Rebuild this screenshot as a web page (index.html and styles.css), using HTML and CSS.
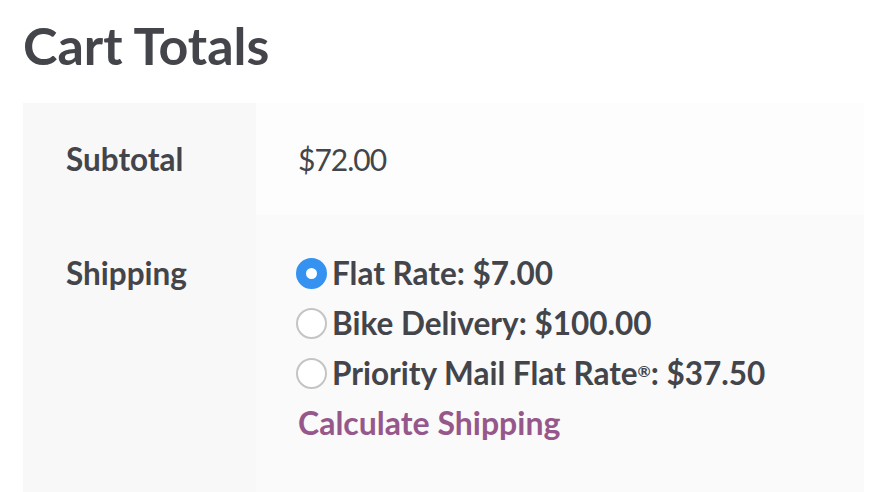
FILE: index.html
```html
<!DOCTYPE html>
<html lang="en">
<head>
  <meta charset="UTF-8">
  <title>Cart Totals</title>
  <link rel="stylesheet" href="styles.css">
</head>
<body>
  <div class="cart-totals">
    <h2>Cart Totals</h2>

    <table class="totals-table">
      <tr class="subtotal">
        <th>Subtotal</th>
        <td><span class="amount">$72.00</span></td>
      </tr>
      <tr class="shipping">
        <th>Shipping</th>
        <td>
          <ul class="shipping-methods">
            <li><span class="radio checked"></span>Flat Rate: $7.00</li>
            <li><span class="radio"></span>Bike Delivery: $100.00</li>
            <li><span class="radio"></span>Priority Mail Flat Rate<sup>®</sup>: $37.50</li>
          </ul>
          <a href="#" class="calc-link">Calculate Shipping</a>
        </td>
      </tr>
    </table>
  </div>
</body>
</html>
```

FILE: styles.css
```css
body {
  margin: 0;
  padding: 0;
  background-color: #fff;
  font-family: Lato, "Liberation Sans", sans-serif;
  color: #43454b;
  overflow: hidden;
}

.cart-totals {
  padding: 0 12px 0 23px;
}

h2 {
  margin: 0;
  padding-top: 14px;
  height: 103px;
  font-size: 52px;
  font-weight: bold;
  line-height: 62px;
  box-sizing: border-box;
}

.totals-table {
  width: 841px;
  border-collapse: collapse;
  background-color: #fdfdfd;
  font-size: 31.5px;
}

.totals-table th {
  width: 233px;
  box-sizing: border-box;
  padding: 0 0 0 43px;
  background-color: #f8f8f8;
  text-align: left;
  vertical-align: top;
  font-weight: bold;
}

.totals-table td {
  padding: 0 0 0 42px;
  vertical-align: top;
}

.subtotal th,
.subtotal td {
  height: 112px;
  line-height: 112px;
}

.amount {
  font-size: 30px;
  letter-spacing: -1px;
}

.shipping th,
.shipping td {
  height: 244px;
  padding-top: 33px;
  line-height: 50px;
}

.shipping td {
  background-color: #fafafa;
}

.shipping-methods {
  list-style: none;
  margin: 0;
  padding: 0;
  font-weight: bold;
}

.shipping-methods li {
  display: flex;
  align-items: center;
  height: 50px;
}

.shipping-methods sup {
  font-size: 16px;
  line-height: 0;
  position: relative;
  top: -2px;
}

.radio {
  width: 31px;
  height: 31px;
  margin: 0 5px 0 -2px;
  border: 2px solid #c4c4c4;
  border-radius: 50%;
  background-color: #fff;
  box-sizing: border-box;
}

.radio.checked {
  border: 10px solid #3592f1;
}

.calc-link {
  display: block;
  color: #96588a;
  font-size: 32px;
  font-weight: bold;
  text-decoration: none;
}
```
